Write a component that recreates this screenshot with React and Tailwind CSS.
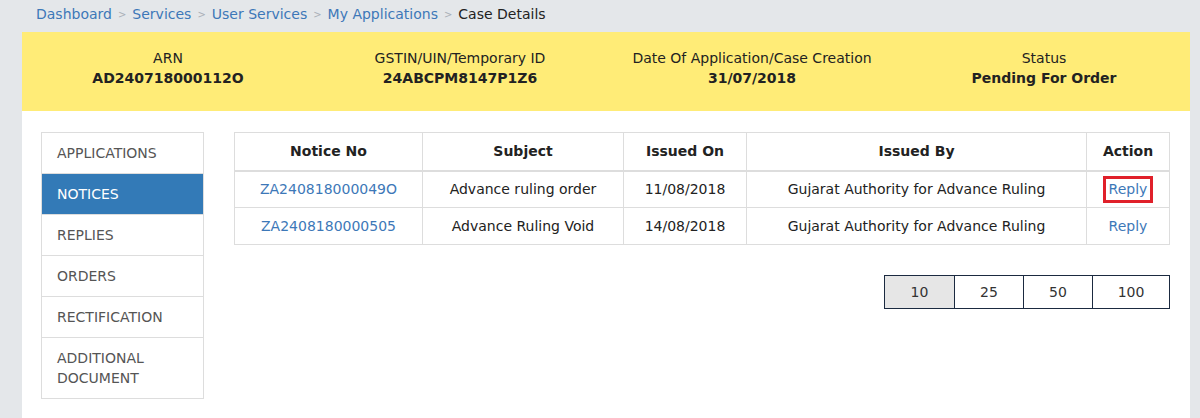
import React from "react";

const font = { fontFamily: '"DejaVu Sans", Verdana, sans-serif' };

function Crumb({ children, last }) {
  return (
    <span className="flex items-center">
      <span className={last ? "text-[#222]" : "text-[#3d78b8]"}>{children}</span>
      {!last && <span className="mx-[6px] text-[10px] text-[#aab0b8]">&gt;</span>}
    </span>
  );
}

const sideItems = ["APPLICATIONS", "NOTICES", "REPLIES", "ORDERS", "RECTIFICATION", "ADDITIONAL DOCUMENT"];

const rows = [
  ["ZA240818000049O", "Advance ruling order", "11/08/2018", "Gujarat Authority for Advance Ruling", true],
  ["ZA2408180000505", "Advance Ruling Void", "14/08/2018", "Gujarat Authority for Advance Ruling", false],
];

export default function App() {
  return (
    <div className="w-[1200px] h-[418px] bg-[#e4e7ea] overflow-hidden text-[14px] text-[#333]" style={font}>
      <div className="ml-[22px] mr-[10px]">
        <div className="h-[32px] flex items-center pl-[14px] pb-[4px]">
          <Crumb>Dashboard</Crumb>
          <Crumb>Services</Crumb>
          <Crumb>User Services</Crumb>
          <Crumb>My Applications</Crumb>
          <Crumb last>Case Details</Crumb>
        </div>
        <div className="h-[79px] bg-[#ffec77] grid grid-cols-4 pt-[16px] text-[#222]">
          {[
            ["ARN", "AD240718000112O"],
            ["GSTIN/UIN/Temporary ID", "24ABCPM8147P1Z6"],
            ["Date Of Application/Case Creation", "31/07/2018"],
            ["Status", "Pending For Order"],
          ].map(([l, v]) => (
            <div key={l} className="text-center leading-[20px]">
              <div>{l}</div>
              <div className="font-bold">{v}</div>
            </div>
          ))}
        </div>
        <div className="bg-white h-[307px] pt-[21px] pl-[19px] pr-[20px] flex gap-[30px]">
          <div className="w-[163px] border border-[#ddd] self-start">
            {sideItems.map((s, i) => (
              <div
                key={s}
                className={
                  "pl-[15px] pr-[10px] flex items-center leading-[20px] " +
                  (i === 5 ? "h-[61px] " : i === 0 ? "h-[40px] " : "h-[41px] ") +
                  (i === 1 ? "bg-[#337ab7] text-white " : "text-[#555] ") +
                  (i > 0 ? "border-t border-[#ddd]" : "")
                }
              >
                {s}
              </div>
            ))}
          </div>
          <div className="flex-1 flex flex-col">
            <table className="w-full border-collapse border border-[#ddd]">
              <thead>
                <tr className="h-[38px] border-b-2 border-[#ddd] text-[#222]">
                  <th className="w-[188px] border border-[#ddd] font-bold">Notice No</th>
                  <th className="w-[201px] border border-[#ddd] font-bold">Subject</th>
                  <th className="w-[123px] border border-[#ddd] font-bold">Issued On</th>
                  <th className="w-[340px] border border-[#ddd] font-bold">Issued By</th>
                  <th className="border border-[#ddd] font-bold">Action</th>
                </tr>
              </thead>
              <tbody>
                {rows.map((r) => (
                  <tr key={r[0]} className="h-[37px] text-center">
                    <td className="border border-[#ddd] text-[#3d78b8]">{r[0]}</td>
                    <td className="border border-[#ddd] text-[#222]">{r[1]}</td>
                    <td className="border border-[#ddd] text-[#222]">{r[2]}</td>
                    <td className="border border-[#ddd] text-[#222]">{r[3]}</td>
                    <td className="border border-[#ddd] text-[#3d78b8]">
                      {r[4] ? (
                        <span className="inline-block border-[3px] border-[#e0202a] px-[3px] leading-[21px]">Reply</span>
                      ) : (
                        "Reply"
                      )}
                    </td>
                  </tr>
                ))}
              </tbody>
            </table>
            <div className="mt-[30px] self-end flex border border-[#1b2a40] h-[34px] text-[#333]">
              {["10", "25", "50", "100"].map((n, i) => (
                <div
                  key={n}
                  className={
                    "flex items-center justify-center " +
                    (i === 3 ? "w-[77px] " : "w-[69px] ") +
                    (i > 0 ? "border-l border-[#1b2a40] " : "") +
                    (i === 0 ? "bg-[#e6e6e6]" : "bg-white")
                  }
                >
                  {n}
                </div>
              ))}
            </div>
          </div>
        </div>
      </div>
    </div>
  );
}
